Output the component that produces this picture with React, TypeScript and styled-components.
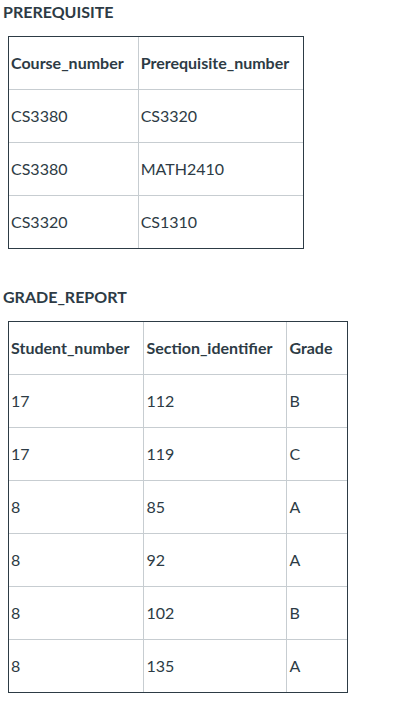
import React from "react";
import styled, { createGlobalStyle } from "styled-components";

const Global = createGlobalStyle`
  html, body { margin: 0; padding: 0; background: #ffffff; }
  body { font-family: Lato, "Open Sans", "Liberation Sans", sans-serif; color: #2d3b45; }
`;

const Page = styled.div`
  padding: 0 0 0 3px;
`;

const Heading = styled.div<{ $top: number }>`
  font-size: 16px;
  font-weight: 700;
  line-height: 24px;
  margin: ${(p) => p.$top}px 0 0 0;
  color: #2d3b45;
`;

const Table = styled.table<{ $top: number }>`
  margin: ${(p) => p.$top}px 0 0 5px;
  border: 1px solid #2d3b45;
  border-spacing: 0;
  font-size: 16px;
  color: #2d3b45;
`;

const Cell = styled.td<{ $head?: boolean }>`
  box-sizing: border-box;
  height: 53px;
  padding: 0 14px 2px 2px;
  font-weight: ${(p) => (p.$head ? 700 : 400)};
  text-align: left;
  vertical-align: middle;
  border-right: 1px solid #c7cdd1;
  border-bottom: 1px solid #c7cdd1;
  white-space: nowrap;
  &:last-child { border-right: none; }
  tr:last-child > & { border-bottom: none; height: 52px; }
`;

type T = { head: string[]; rows: string[][] };

const prereq: T = {
  head: ["Course_number", "Prerequisite_number"],
  rows: [
    ["CS3380", "CS3320"],
    ["CS3380", "MATH2410"],
    ["CS3320", "CS1310"],
  ],
};

const grade: T = {
  head: ["Student_number", "Section_identifier", "Grade"],
  rows: [
    ["17", "112", "B"],
    ["17", "119", "C"],
    ["8", "85", "A"],
    ["8", "92", "A"],
    ["8", "102", "B"],
    ["8", "135", "A"],
  ],
};

function DataTable({ t, top }: { t: T; top: number }) {
  return (
    <Table $top={top}>
      <tbody>
        <tr>
          {t.head.map((h) => (
            <Cell key={h} $head>
              {h}
            </Cell>
          ))}
        </tr>
        {t.rows.map((r, i) => (
          <tr key={i}>
            {r.map((c, j) => (
              <Cell key={j}>{c}</Cell>
            ))}
          </tr>
        ))}
      </tbody>
    </Table>
  );
}

export default function App() {
  return (
    <Page>
      <Global />
      <Heading $top={0}>PREREQUISITE</Heading>
      <DataTable t={prereq} top={12} />
      <Heading $top={36}>GRADE_REPORT</Heading>
      <DataTable t={grade} top={12} />
    </Page>
  );
}
